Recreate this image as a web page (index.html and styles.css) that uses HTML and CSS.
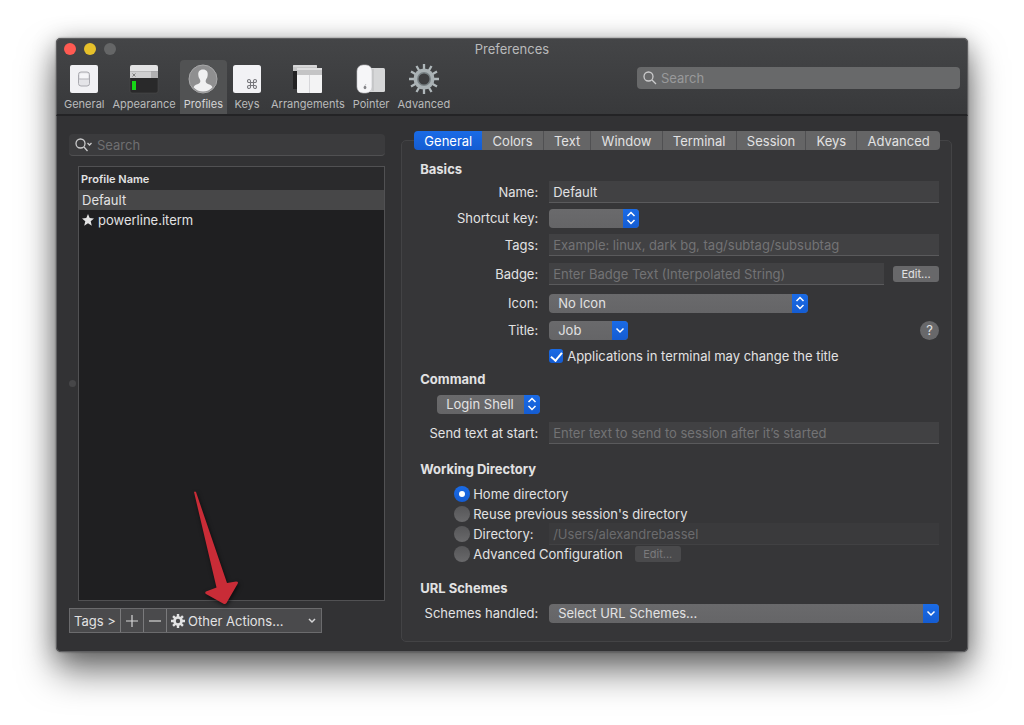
FILE: index.html
```html
<!DOCTYPE html>
<html lang="en">
<head>
  <meta charset="UTF-8" />
  <meta name="viewport" content="width=device-width, initial-scale=1.0"/>
  <title>Preferences</title>
  <link rel="stylesheet" href="styles.css">
</head>
<body>
  <main class="window">
    <header class="header">
      <div class="titlebar">
        <div class="lights">
          <button class="light light-close" aria-label="Close"></button>
          <button class="light light-min" aria-label="Minimize"></button>
          <button class="light light-zoom" aria-label="Zoom" disabled></button>
        </div>
        <h1>Preferences</h1>
      </div>
      <div class="toolbar">
        <nav class="tools">
          <button class="tool">
            <svg width="30" height="30" viewBox="0 0 30 30">
              <rect x="1" y="1" width="28" height="28" rx="2" fill="#f1f1f4"/>
              <rect x="9.500" y="8" width="11" height="14" rx="2.500" fill="#e4e4e8" stroke="#aaaab0"/>
              <rect x="11" y="9.500" width="8" height="5.500" rx="1" fill="#f5f5f8"/>
              <path d="M10 15h10" stroke="#b4b4ba"/>
            </svg>
            <span>General</span>
          </button>
          <button class="tool">
            <svg width="30" height="30" viewBox="0 0 30 30">
              <path d="M1 13h28v14q0 2-2 2H3q-2 0-2-2z" fill="#29292a" stroke="#4b4b4c" stroke-width=".6"/>
              <path d="M3 1h24q2 0 2 2v5H1V3q0-2 2-2z" fill="#e3e3e4"/>
              <path d="M1 8h28v6H1z" fill="#cfcfd0"/>
              <path d="M22 7h7v7h-7z" fill="#b1b1b2"/>
              <path d="M1 7.500h28" stroke="#a6a6a7" stroke-width=".7"/>
              <path d="M3.500 9.500l3 3m0-3l-3 3" stroke="#777" stroke-width=".9"/>
              <rect x="3" y="17" width="4" height="9" fill="#16d616"/>
            </svg>
            <span>Appearance</span>
          </button>
          <button class="tool tool-active">
            <svg width="30" height="30" viewBox="0 0 30 30">
              <circle cx="15" cy="15" r="14" fill="#8f8f90" stroke="#a8a8a9"/>
              <path d="M15 5.500c-3.500 0-5 2.300-4.700 5.300.1 1 .1 1.700.4 2.500.4 1.200 1.200 2 1.500 2.900.3 1.400.1 2.500-1.200 3.200-2 1-4.500 1.400-5.500 3.800 2.400 2.700 5.700 4.300 9.500 4.300s7.100-1.600 9.500-4.300c-1-2.400-3.500-2.800-5.500-3.800-1.300-.7-1.500-1.800-1.200-3.200.3-.9 1.100-1.700 1.500-2.900.3-.8.300-1.500.4-2.500.3-3-1.200-5.300-4.700-5.300z" fill="#f0f0f1"/>
            </svg>
            <span>Profiles</span>
          </button>
          <button class="tool">
            <svg width="30" height="30" viewBox="0 0 30 30">
              <rect x="1" y="1" width="28" height="28" rx="2.500" fill="#f2f2f5"/>
              <path d="M18.500 18.500h3v3h-3zM18.500 18.500v-1.400a1.500 1.500 0 1 0-1.500 1.400zM21.500 18.500v-1.400a1.500 1.500 0 1 1 1.500 1.400zM18.500 21.500v1.400a1.500 1.500 0 1 1-1.500-1.400zM21.500 21.500v1.400a1.500 1.500 0 1 0 1.500-1.400z" fill="none" stroke="#77777c" stroke-width="1.100"/>
            </svg>
            <span>Keys</span>
          </button>
          <button class="tool">
            <svg width="30" height="30" viewBox="0 0 30 30">
              <path d="M0 6h6v19H0z" fill="#222223"/>
              <path d="M1 1h22q1 0 1 1v5H0V2q0-1 1-1z" fill="#c6c6c7"/>
              <path d="M0 2h24" stroke="#e7e7e8"/>
              <path d="M5 4h23q1 0 1 1v23q0 1-1 1H5q-1 0-1-1V5q0-1 1-1z" fill="#f3f3f4"/>
              <path d="M4 5h25v6H4z" fill="#c4c4c5"/>
              <path d="M4 4h25v2H4z" fill="#dededf"/>
              <path d="M16.500 11v18" stroke="#d7d7da"/>
            </svg>
            <span>Arrangements</span>
          </button>
          <button class="tool">
            <svg width="30" height="30" viewBox="0 0 30 30">
              <rect x="12" y="4" width="17" height="24" rx="1.500" fill="#d6d7d8"/>
              <path d="M17 5v22" stroke="#b9babb"/>
              <rect x="1" y="1" width="15" height="28" rx="6" fill="#f6f6f8" stroke="#c3c3c6" stroke-width=".6"/>
              <ellipse cx="9" cy="23.500" rx="1.400" ry="1.700" fill="#858589"/>
              <path d="M9 21.500l.8-1.200" stroke="#858589" stroke-width=".7"/>
            </svg>
            <span>Pointer</span>
          </button>
          <button class="tool">
            <svg width="30" height="30" viewBox="0 0 30 30">
              <g stroke="#b0b8bb" stroke-width="2.300">
                <path d="M15 0v30M0 15h30"/>
                <path d="M15 0v30M0 15h30" transform="rotate(30 15 15)"/>
                <path d="M15 0v30M0 15h30" transform="rotate(60 15 15)"/>
              </g>
              <circle cx="15" cy="15" r="10.500" fill="#a9b1b4"/>
              <circle cx="15" cy="15" r="7" fill="#788184"/>
              <circle cx="15" cy="15" r="5.500" fill="#3d3e40"/>
            </svg>
            <span>Advanced</span>
          </button>
        </nav>
        <label class="search search-main">
          <svg width="14" height="14" viewBox="0 0 14 14"><circle cx="5.500" cy="5.500" r="4.500"/><path d="M9 9l4 4"/></svg>
          <input type="search" placeholder="Search" aria-label="Search preferences">
        </label>
      </div>
    </header>

    <div class="content">
      <section class="sidebar">
        <label class="search search-profiles">
          <svg width="18" height="14" viewBox="0 0 18 14"><circle cx="5.500" cy="5.500" r="4.500"/><path d="M9 9l3.500 4M12.500 5l2 2 2-2"/></svg>
          <input type="search" placeholder="Search" aria-label="Search profiles">
        </label>
        <div class="profiles">
          <span class="splitter"></span>
          <div class="profile-list">
            <table>
              <thead>
                <tr><th>Profile Name</th></tr>
              </thead>
              <tbody>
                <tr class="selected"><td>Default</td></tr>
                <tr>
                  <td class="starred">
                    <svg width="12" height="12" viewBox="0 0 12 12"><path d="M6 0l1.700 4.100 4.300.3-3.300 2.800 1.100 4.500L6 9.300l-3.800 2.400 1.100-4.500L0 4.400l4.300-.3z" fill="#e2e2e3"/></svg>
                    powerline.iterm
                  </td>
                </tr>
              </tbody>
            </table>
          </div>
        </div>
        <div class="actions">
          <button class="action action-tags">Tags &gt;</button>
          <button class="action" aria-label="Add profile">
            <svg width="12" height="12" viewBox="0 0 12 12"><path d="M6 0v12M0 6h12"/></svg>
          </button>
          <button class="action" aria-label="Remove profile">
            <svg width="12" height="12" viewBox="0 0 12 12"><path d="M0 6h12"/></svg>
          </button>
          <div class="other">
            <svg class="other-gear" width="14" height="14" viewBox="0 0 14 14">
              <g stroke="#e2e2e3" stroke-width="2.400">
                <path d="M7 0v4M7 10v4M0 7h4M10 7h4"/>
                <path d="M7 0v4M7 10v4M0 7h4M10 7h4" transform="rotate(45 7 7)"/>
              </g>
              <circle cx="7" cy="7" r="3.500" fill="none" stroke="#e2e2e3" stroke-width="2.600"/>
            </svg>
            <select aria-label="Other actions">
              <option>Other Actions...</option>
            </select>
            <svg class="other-arrow" width="8" height="6" viewBox="0 0 8 6"><path d="M1 1l3 3 3-3"/></svg>
          </div>
          <!-- red arrow pointing at Other Actions -->
          <svg class="pointer" width="60" height="120" viewBox="0 0 60 120">
            <path d="M6 3q1-1 2 0l31 91 9-1.500q3 0 1.500 2.500L38.500 114q-1 1.500-3 .8L18 105q-1.500-1.500 0-2.500l10.500-4z" fill="#c92c37"/>
          </svg>
        </div>
      </section>

      <section class="panel">
        <div class="tabs" role="tablist">
          <button class="tab tab-active" role="tab" aria-selected="true">General</button>
          <button class="tab" role="tab">Colors</button>
          <button class="tab" role="tab">Text</button>
          <button class="tab" role="tab">Window</button>
          <button class="tab" role="tab">Terminal</button>
          <button class="tab" role="tab">Session</button>
          <button class="tab" role="tab">Keys</button>
          <button class="tab" role="tab">Advanced</button>
        </div>

        <form class="form">
          <h2>Basics</h2>
          <div class="row row-tight">
            <label for="name">Name:</label>
            <input class="field" id="name" type="text" value="Default">
          </div>
          <div class="row row-tight">
            <label for="shortcut">Shortcut key:</label>
            <div class="select select-small">
              <select id="shortcut"><option></option></select>
              <span class="stepper"><svg width="10" height="14" viewBox="0 0 10 14"><path d="M1.500 5L5 1.500 8.500 5M1.500 9L5 12.500 8.500 9"/></svg></span>
            </div>
          </div>
          <div class="row">
            <label for="tags">Tags:</label>
            <input class="field" id="tags" type="text" placeholder="Example: linux, dark bg, tag/subtag/subsubtag">
          </div>
          <div class="row row-tall">
            <label for="badge">Badge:</label>
            <input class="field" id="badge" type="text" placeholder="Enter Badge Text (Interpolated String)">
            <button class="edit" type="button">Edit...</button>
          </div>
          <div class="row">
            <label for="icon">Icon:</label>
            <div class="select select-icon">
              <select id="icon"><option>No Icon</option></select>
              <span class="stepper"><svg width="10" height="14" viewBox="0 0 10 14"><path d="M1.500 5L5 1.500 8.500 5M1.500 9L5 12.500 8.500 9"/></svg></span>
            </div>
          </div>
          <div class="row row-tight">
            <label for="title">Title:</label>
            <div class="select select-title">
              <select id="title"><option>Job</option></select>
              <span class="stepper"><svg width="10" height="8" viewBox="0 0 10 8"><path d="M1.500 2.500L5 6l3.500-3.500"/></svg></span>
            </div>
            <button class="help" type="button" aria-label="Help">?</button>
          </div>
          <div class="row row-tight row-check">
            <input class="check" id="change" type="checkbox" checked>
            <label for="change">Applications in terminal may change the title</label>
          </div>

          <h2>Command</h2>
          <div class="row row-tall row-shell">
            <div class="select select-shell">
              <select aria-label="Command"><option>Login Shell</option></select>
              <span class="stepper"><svg width="10" height="14" viewBox="0 0 10 14"><path d="M1.500 5L5 1.500 8.500 5M1.500 9L5 12.500 8.500 9"/></svg></span>
            </div>
          </div>
          <div class="row">
            <label for="send">Send text at start:</label>
            <input class="field" id="send" type="text" placeholder="Enter text to send to session after it’s started">
          </div>

          <h2 class="spaced">Working Directory</h2>
          <div class="radios">
            <div class="radio">
              <input type="radio" name="dir" id="dir-home" checked>
              <label for="dir-home">Home directory</label>
            </div>
            <div class="radio">
              <input type="radio" name="dir" id="dir-reuse">
              <label for="dir-reuse">Reuse previous session's directory</label>
            </div>
            <div class="radio">
              <input type="radio" name="dir" id="dir-path">
              <label class="dir-label" for="dir-path">Directory:</label>
              <input class="field" type="text" value="/Users/alexandrebassel" aria-label="Directory path" disabled>
            </div>
            <div class="radio">
              <input type="radio" name="dir" id="dir-adv">
              <label for="dir-adv">Advanced Configuration</label>
              <button class="edit" type="button" disabled>Edit...</button>
            </div>
          </div>

          <h2 class="spaced">URL Schemes</h2>
          <div class="row row-tall">
            <label for="schemes">Schemes handled:</label>
            <div class="select select-wide">
              <select id="schemes"><option>Select URL Schemes...</option></select>
              <span class="stepper"><svg width="10" height="8" viewBox="0 0 10 8"><path d="M1.500 2.500L5 6l3.500-3.500"/></svg></span>
            </div>
          </div>
        </form>
      </section>
    </div>
  </main>
</body>
</html>
```

FILE: styles.css
```css
* {
  box-sizing: border-box;
}
body {
  min-height: 100vh;
  margin: 0;
  padding: 38px 56px;
  background: #fff;
  color: #e2e2e3;
  font-family: Inter, "Liberation Sans", sans-serif;
  font-size: 13px;
  line-height: 16px;
}
button, input, select {
  margin: 0;
  padding: 0;
  border: none;
  color: inherit;
  font: inherit;
}
svg {
  flex: none;
  display: block;
}
h1, h2 {
  margin: 0;
  font-size: 13px;
}

.window {
  border-radius: 5px;
  background: #323234;
  box-shadow: inset 0 0 0 1px #5e5e60, 0 0 2px rgba(0, 0, 0, 0.5), 0 4px 24px rgba(0, 0, 0, 0.3), 0 20px 36px rgba(0, 0, 0, 0.5);
}

/* title bar and toolbar */
.header {
  border: 1px solid #5e5e60;
  border-bottom: 2px solid #232325;
  border-radius: 5px 5px 0 0;
  background: linear-gradient(#444547, #38393b);
}
.titlebar {
  display: grid;
  grid-template-columns: 1fr auto 1fr;
  align-items: center;
  height: 20px;
}
.lights {
  display: flex;
  gap: 8px;
  padding-left: 7px;
}
.light {
  width: 12px;
  height: 12px;
  border-radius: 50%;
}
.light-close {
  background: #ff5a52;
}
.light-min {
  background: #e6c02a;
}
.light-zoom {
  background: #656667;
}
.titlebar h1 {
  color: #b9babb;
  font-weight: normal;
}
.toolbar {
  display: flex;
  justify-content: space-between;
  padding: 1px 7px 0 3px;
}
.tools {
  display: flex;
}
.tool {
  display: flex;
  flex-direction: column;
  align-items: center;
  gap: 2px;
  min-width: 40px;
  height: 54px;
  padding: 4px 4px 0;
  background: none;
  color: #b9babb;
  font-size: 11px;
}
.tool-active {
  border-radius: 4px 4px 0 0;
  background: #515253;
  color: #d5d5d6;
}
.search {
  display: flex;
  align-items: center;
  gap: 4px;
  height: 22px;
  padding: 0 6px;
  border-radius: 4px;
}
.search svg {
  fill: none;
  stroke: #cbcbcc;
  stroke-width: 1.3;
}
.search input {
  flex: 1;
  min-width: 0;
  background: none;
  outline: none;
}
.search-main {
  flex: 0 1 323px;
  margin-top: 7px;
  background: #68696a;
}
.search-main input::placeholder {
  color: #98999a;
}
.search-profiles {
  border-bottom: 1px solid #505052;
  background: #3b3b3d;
}
.search-profiles input::placeholder {
  color: #6f6f71;
}

.content {
  display: grid;
  grid-template-columns: minmax(0, 31fr) minmax(0, 54fr);
  gap: 16px;
  padding: 18px 16px 10px 13px;
}

/* profile list */
.sidebar {
  display: flex;
  flex-direction: column;
  padding-bottom: 9px;
}
.profiles {
  display: flex;
  flex: 1;
  align-items: center;
  gap: 2px;
  margin: 10px 0 7px;
}
.splitter {
  width: 7px;
  height: 7px;
  border-radius: 50%;
  background: #464648;
}
.profile-list {
  flex: 1;
  align-self: stretch;
  border: 1px solid #515153;
  background: #1f1f21;
}
table {
  width: 100%;
  border-collapse: collapse;
}
th {
  height: 23px;
  padding: 0 2px;
  background: #2a2a2c;
  font-size: 11px;
  font-weight: 600;
  text-align: left;
}
td {
  height: 20px;
  padding: 2px 3px;
}
.selected {
  background: #474748;
}
.starred {
  display: flex;
  align-items: center;
  gap: 4px;
}
.actions {
  display: flex;
  position: relative;
  align-self: flex-start;
  height: 25px;
  border: 1px solid #6b6b6d;
  background: #4a4a4c;
}
.action {
  display: flex;
  align-items: center;
  justify-content: center;
  width: 23px;
  border-right: 1px solid #7a7a7c;
  background: none;
}
.action-tags {
  width: 51px;
}
.action svg, .other-arrow {
  fill: none;
  stroke: #d5d5d6;
  stroke-width: 1.2;
}
.other-arrow {
  stroke-width: 1.5;
}
.other {
  position: relative;
}
.other select {
  width: 154px;
  height: 23px;
  padding: 0 20px 0 21px;
  appearance: none;
  background: none;
}
.other-gear {
  position: absolute;
  top: 5px;
  left: 4px;
}
.other-arrow {
  position: absolute;
  top: 9px;
  right: 5px;
}
.pointer {
  position: absolute;
  left: 118px;
  bottom: 100%;
  filter: drop-shadow(1px 2px 2px rgba(0, 0, 0, 0.6));
}

/* settings panel */
.panel {
  margin-top: 6px;
  border: 1px solid #434345;
  border-radius: 5px;
  background: #363638;
}
.tabs {
  display: flex;
  margin: -10px 11px 9px 12px;
}
.tab {
  flex: 1 1 auto;
  height: 19px;
  border-right: 1px solid #505052;
  background: #656566;
}
.tab:first-child {
  border-radius: 4px 0 0 4px;
}
.tab:last-child {
  border-right: none;
  border-radius: 0 4px 4px 0;
}
.tab-active {
  border-right: none;
  background: linear-gradient(#1a6be6, #145cd2);
  color: #fff;
}
.form {
  padding: 0 12px 13px 18px;
}
h2 {
  line-height: 20px;
  font-weight: 700;
}
.spaced {
  margin-top: 12px;
}
.row {
  display: flex;
  align-items: center;
  height: 28px;
}
.row > label:first-child {
  flex: none;
  width: 118px;
  margin-right: 11px;
  text-align: right;
}
.row-tight {
  height: 26px;
}
.row-tall {
  height: 30px;
}
.row-check {
  gap: 4px;
  padding-left: 129px;
}
.row-shell {
  padding-left: 17px;
}
.field {
  flex: 1;
  min-width: 0;
  height: 22px;
  padding: 0 4px;
  border-bottom: 1px solid #5a5a5c;
  background: #414143;
}
.field::placeholder {
  color: #737375;
}
.field:disabled {
  border-bottom-color: #414143;
  background: #3a3a3c;
  color: #6b6b6d;
}
.select {
  position: relative;
  height: 19px;
}
.select select {
  width: 100%;
  height: 19px;
  padding: 0 20px 0 9px;
  appearance: none;
  border-radius: 4px;
  background: linear-gradient(#6a6a6c, #656567);
}
.select-small {
  width: 90px;
}
.select-icon {
  width: 259px;
}
.select-title {
  width: 79px;
}
.select-shell {
  width: 103px;
}
.select-wide {
  flex: 1;
}
.stepper {
  display: flex;
  align-items: center;
  justify-content: center;
  position: absolute;
  top: 0;
  right: 0;
  width: 16px;
  height: 19px;
  border-radius: 0 4px 4px 0;
  background: linear-gradient(#1a6be6, #145cd2);
  pointer-events: none;
}
.stepper svg {
  fill: none;
  stroke: #fff;
  stroke-width: 1.5;
}
.edit {
  width: 46px;
  height: 16px;
  margin-left: 9px;
  border-radius: 3px;
  background: #68686a;
  font-size: 11px;
}
.edit:disabled {
  background: #4a4a4c;
  color: #7a7a7c;
}
.help {
  width: 19px;
  height: 19px;
  margin-left: auto;
  border-radius: 50%;
  background: #68686a;
}
.check {
  display: flex;
  justify-content: center;
  width: 14px;
  height: 14px;
  appearance: none;
  border-radius: 3px;
  background: #68686a;
}
.check:checked {
  background: linear-gradient(#1a6be6, #145cd2);
}
.check:checked::after {
  content: "";
  width: 5px;
  height: 9px;
  margin-top: 1px;
  border: solid #fff;
  border-width: 0 2px 2px 0;
  transform: rotate(40deg);
}
.radios {
  padding: 5px 0 2px 34px;
}
.radio {
  display: flex;
  align-items: center;
  gap: 3px;
  height: 20px;
}
.radio input[type="radio"] {
  display: flex;
  align-items: center;
  justify-content: center;
  width: 16px;
  height: 16px;
  appearance: none;
  border-radius: 50%;
  background: linear-gradient(#565658, #69696b);
}
.radio input[type="radio"]:checked {
  background: linear-gradient(#1a6be6, #145cd2);
}
.radio input[type="radio"]:checked::after {
  content: "";
  width: 6px;
  height: 6px;
  border-radius: 50%;
  background: #fff;
}
.dir-label {
  width: 73px;
}
```
